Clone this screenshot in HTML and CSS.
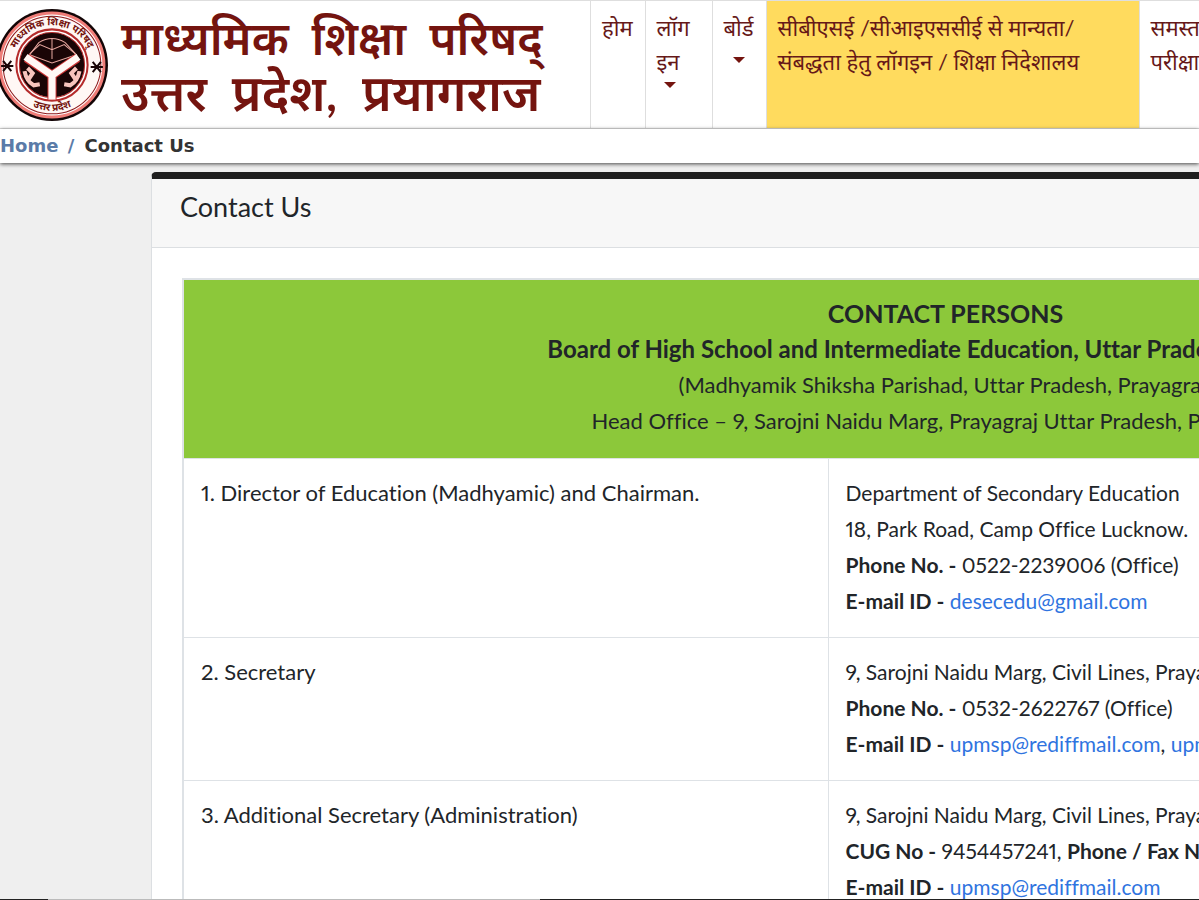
FILE: index.html
```html
<!DOCTYPE html>
<html lang="hi">
<head>
  <meta charset="UTF-8">
  <title>Contact Us</title>
  <link rel="stylesheet" href="styles.css">
</head>
<body>

  <div class="page">
    <header class="topbar">
      <a class="brand" href="#">
        <svg class="logo" viewBox="0 0 112 112" role="img" aria-label="उत्तर प्रदेश">
          <defs>
            <path id="arc-top" d="M 17 56 A 39 39 0 0 1 95 56"/>
            <path id="arc-bottom" d="M 11 56 A 45 45 0 0 0 101 56"/>
          </defs>
          <circle cx="56" cy="56" r="55" fill="#130506"/>
          <circle cx="56" cy="56" r="51" fill="#fff" stroke="#ef7d78" stroke-width="3"/>
          <circle cx="56" cy="56" r="48" fill="#fff8f5" stroke="#8d1a1c" stroke-width="1"/>
          <circle cx="56" cy="56" r="35" fill="#fff" stroke="#b52c2c" stroke-width="2"/>
          <circle cx="56" cy="56" r="32" fill="#1a0506" stroke="#b52c2c" stroke-width="1"/>
          <!-- bow -->
          <path d="M34 46 L43 34 Q56 26 69 34 L80 46 L56 54 Z" fill="#1a0506" stroke="#e8a8a0" stroke-width="1"/>
          <path d="M34 45 L44 36 L56 41 L68 36 L79 45 M56 30 V50" fill="none" stroke="#e8a8a0" stroke-width="1"/>
          <!-- rivers -->
          <path d="M31 49 L56 66 L81 49 M56 65 V90" fill="none" stroke="#c33" stroke-width="9"/>
          <path d="M30 48 L56 66 L82 48 M56 65 V90" fill="none" stroke="#fff8f5" stroke-width="7"/>
          <!-- fishes -->
          <path d="M29 62 q2 10 9 14 l6 -1 M32 59 l5 5 l-4 6 M83 62 q-2 10 -9 14 l-6 -1 M80 59 l-5 5 l4 6" fill="none" stroke="#f7c4bd" stroke-width="4"/>
          <path d="M6 57 h12 M8 52 l8 10 M16 52 l-8 10 M94 58 h12 M96 53 l8 10 M104 53 l-8 10" stroke="#1a0506" stroke-width="2"/>
          <text class="logo-text"><textPath href="#arc-top" startOffset="50%" text-anchor="middle">माध्यमिक शिक्षा परिषद्</textPath></text>
          <text class="logo-text"><textPath href="#arc-bottom" startOffset="50%" text-anchor="middle">उत्तर प्रदेश</textPath></text>
        </svg>
        <span class="brand-name">
          <span>माध्यमिक&nbsp; शिक्षा&nbsp; परिषद्</span>
          <span class="brand-place">उत्तर&nbsp; प्रदेश,&nbsp; प्रयागराज</span>
        </span>
      </a>
      <nav class="menu">
        <a href="#">होम</a>
        <a class="login" href="#">लॉग इन<i class="caret"></i></a>
        <a href="#">बोर्ड<i class="caret"></i></a>
        <a class="highlight" href="#">सीबीएसई /सीआइएससीई से मान्यता/<br>संबद्धता हेतु लॉगइन / शिक्षा निदेशालय</a>
        <a href="#">समस्त<br>परीक्षा</a>
      </nav>
    </header>

    <div class="breadcrumb">
      <a href="#">Home</a> <span class="sep">/</span> <span>Contact Us</span>
    </div>

    <main class="content">
      <section class="card">
        <h1>Contact Us</h1>
        <div class="card-body">
          <table>
            <thead>
              <tr>
                <th colspan="2">
                  <div class="head-title">CONTACT PERSONS</div>
                  <div class="head-board">Board of High School and Intermediate Education, Uttar Pradesh, Prayagraj</div>
                  <div>(Madhyamik Shiksha Parishad, Uttar Pradesh, Prayagraj)</div>
                  <div>Head Office – 9, Sarojni Naidu Marg, Prayagraj Uttar Pradesh, PIN-211001</div>
                </th>
              </tr>
            </thead>
            <tbody>
              <tr>
                <td class="person">1. Director of Education (Madhyamic) and Chairman.</td>
                <td class="details">
                  Department of Secondary Education<br>
                  18, Park Road, Camp Office Lucknow.<br>
                  <b>Phone No. -</b> 0522-2239006 (Office)<br>
                  <b>E-mail ID -</b> <a href="#">desecedu@gmail.com</a>
                </td>
              </tr>
              <tr>
                <td class="person">2. Secretary</td>
                <td class="details">
                  9, Sarojni Naidu Marg, Civil Lines, Prayagraj<br>
                  <b>Phone No. -</b> 0532-2622767 (Office)<br>
                  <b>E-mail ID -</b> <a href="#">upmsp@rediffmail.com</a>, <a href="#">upmsp</a>
                </td>
              </tr>
              <tr>
                <td class="person">3. Additional Secretary (Administration)</td>
                <td class="details">
                  9, Sarojni Naidu Marg, Civil Lines, Prayagraj<br>
                  <b>CUG No -</b> 9454457241, <b>Phone / Fax No</b><br>
                  <b>E-mail ID -</b> <a href="#">upmsp@rediffmail.com</a>
                </td>
              </tr>
            </tbody>
          </table>
        </div>
      </section>
    </main>
    <div class="bottom-line"></div>
  </div>

</body>
</html>
```
FILE: styles.css
```css
* {
  box-sizing: border-box;
}

body {
  margin: 0;
  overflow: hidden;
  background: #efefef;
  color: #212529;
  font-family: Lato, "Noto Sans", "Noto Sans Devanagari", sans-serif;
  font-size: 22px;
  font-variant-ligatures: no-common-ligatures;
  font-variant-numeric: proportional-nums;
  line-height: 36px;
}

a {
  color: #2f74e0;
  text-decoration: none;
}

.page {
  display: flex;
  flex-direction: column;
  height: 100vh;
}

/* header */
.topbar {
  display: flex;
  flex-shrink: 0;
  min-width: 1892px;
  background: #fff;
  border-top: 1px solid #dedede;
  border-bottom: 1px solid #dedede;
}

.brand {
  display: flex;
  flex: 0 0 590px;
  align-items: center;
  gap: 12px;
  padding: 7px 0 6px;
  color: #74140f;
}

.logo {
  width: 114px;
  height: 114px;
  margin-left: -5px;
}

.logo-text {
  font-size: 10px;
  font-weight: bold;
  fill: #74140f;
}

.brand-name {
  display: flex;
  flex-direction: column;
  font-size: 46px;
  font-weight: 600;
  line-height: 54px;
  white-space: nowrap;
}

.brand-place {
  font-size: 50px;
}

.menu {
  display: flex;
  flex: 1;
  line-height: 34px;
}

.menu a {
  padding: 10px 12px 14px 11px;
  border-left: 1px solid #dedede;
  color: #661818;
  white-space: nowrap;
}

.menu .login {
  width: 67px;
  white-space: normal;
}

.menu .highlight {
  width: 373px;
  background: #ffdb5e;
}

.caret {
  display: block;
  width: 12px;
  margin: 12px auto;
  border: 6px solid transparent;
  border-top-color: #74140f;
  border-bottom: 0;
}

.login .caret {
  margin: 3px auto 0 7px;
}

/* breadcrumb */
.breadcrumb {
  position: relative;
  flex-shrink: 0;
  height: 34px;
  background: #fff;
  box-shadow: 0 1px 4px #444;
  color: #333;
  font-family: "DejaVu Sans", sans-serif;
  font-size: 18px;
  font-weight: bold;
  line-height: 34px;
}

.breadcrumb a,
.breadcrumb .sep {
  color: #5a7ba8;
}

.breadcrumb .sep {
  margin: 0 4px 0 3px;
}

/* card */
.content {
  flex: 1;
  min-width: 1892px;
  padding: 9px 152px 0 151px;
  overflow: hidden;
}

.card {
  background: #fff;
  border: 1px solid #dcdfe2;
  border-top: 7px solid #1f1f1f;
  border-radius: 5px 5px 0 0;
}

.card h1 {
  margin: 0;
  padding: 10px 28px 22px;
  background: #f7f7f7;
  border-bottom: 1px solid #dcdfe2;
  font-size: 27px;
  font-weight: normal;
}

.card-body {
  padding: 30px;
}

table {
  width: 100%;
  border: 2px solid #dee2e6;
  border-collapse: collapse;
}

th {
  padding: 15px 17px 19px;
  background: #8cc83a;
  font-weight: normal;
}

.head-title {
  font-size: 25px;
  font-weight: bold;
}

.head-board {
  font-size: 24px;
  font-weight: bold;
}

td {
  padding: 16px 17px 18px;
  border: 1px solid #dee2e6;
  vertical-align: top;
}

.person {
  width: 645px;
}

.details {
  font-size: 21px;
}

/* line along the window's lower edge */
.bottom-line {
  flex: 0 0 1px;
  background: linear-gradient(to right, #222 4%, #bbb 4%, #bbb 45%, #222 45%);
}
```
